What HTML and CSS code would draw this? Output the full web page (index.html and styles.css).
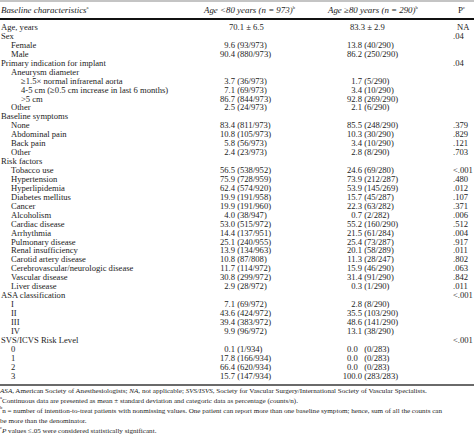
FILE: index.html
```
<!DOCTYPE html>
<html lang="en">
<head>
    <meta charset="UTF-8">
    <title>Baseline characteristics by age</title>
    <link rel="stylesheet" href="styles.css">
</head>
<body>

<div class="sheet">
    <div class="row head">
        <div><i>Baseline characteristics</i><sup>a</sup></div>
        <div class="h2"><i>Age &lt;80 years (n = 973)</i><sup>b</sup></div>
        <div class="h3"><i>Age &ge;80 years (n = 290)</i><sup>b</sup></div>
        <div class="hp">P<sup>c</sup></div>
    </div>

    <div class="body">
        <div class="row"><div>Age, years</div><div class="c2 mean">70.1 &plusmn; 6.5</div><div class="c3 mean">83.3 &plusmn; 2.9</div><div class="p na">NA</div></div>
        <div class="row"><div>Sex</div><div></div><div></div><div class="p">.04</div></div>
        <div class="row"><div class="i1">Female</div><div class="c2"><span class="n">9.6</span> (93/973)</div><div class="c3"><span class="n">13.8</span> (40/290)</div><div></div></div>
        <div class="row"><div class="i1">Male</div><div class="c2"><span class="n">90.4</span> (880/973)</div><div class="c3"><span class="n">86.2</span> (250/290)</div><div></div></div>
        <div class="row"><div>Primary indication for implant</div><div></div><div></div><div class="p">.04</div></div>
        <div class="row"><div class="i1">Aneurysm diameter</div><div></div><div></div><div></div></div>
        <div class="row"><div class="i2">&ge;1.5&times; normal infrarenal aorta</div><div class="c2"><span class="n">3.7</span> (36/973)</div><div class="c3"><span class="n">1.7</span> (5/290)</div><div></div></div>
        <div class="row"><div class="i2">4-5 cm (&ge;0.5 cm increase in last 6 months)</div><div class="c2"><span class="n">7.1</span> (69/973)</div><div class="c3"><span class="n">3.4</span> (10/290)</div><div></div></div>
        <div class="row"><div class="i2">&gt;5 cm</div><div class="c2"><span class="n">86.7</span> (844/973)</div><div class="c3"><span class="n">92.8</span> (269/290)</div><div></div></div>
        <div class="row"><div class="i1">Other</div><div class="c2"><span class="n">2.5</span> (24/973)</div><div class="c3"><span class="n">2.1</span> (6/290)</div><div></div></div>
        <div class="row"><div>Baseline symptoms</div><div></div><div></div><div></div></div>
        <div class="row"><div class="i1">None</div><div class="c2"><span class="n">83.4</span> (811/973)</div><div class="c3"><span class="n">85.5</span> (248/290)</div><div class="p">.379</div></div>
        <div class="row"><div class="i1">Abdominal pain</div><div class="c2"><span class="n">10.8</span> (105/973)</div><div class="c3"><span class="n">10.3</span> (30/290)</div><div class="p">.829</div></div>
        <div class="row"><div class="i1">Back pain</div><div class="c2"><span class="n">5.8</span> (56/973)</div><div class="c3"><span class="n">3.4</span> (10/290)</div><div class="p">.121</div></div>
        <div class="row"><div class="i1">Other</div><div class="c2"><span class="n">2.4</span> (23/973)</div><div class="c3"><span class="n">2.8</span> (8/290)</div><div class="p">.703</div></div>
        <div class="row"><div>Risk factors</div><div></div><div></div><div></div></div>
        <div class="row"><div class="i1">Tobacco use</div><div class="c2"><span class="n">56.5</span> (538/952)</div><div class="c3"><span class="n">24.6</span> (69/280)</div><div class="p">&lt;.001</div></div>
        <div class="row"><div class="i1">Hypertension</div><div class="c2"><span class="n">75.9</span> (728/959)</div><div class="c3"><span class="n">73.9</span> (212/287)</div><div class="p">.480</div></div>
        <div class="row"><div class="i1">Hyperlipidemia</div><div class="c2"><span class="n">62.4</span> (574/920)</div><div class="c3"><span class="n">53.9</span> (145/269)</div><div class="p">.012</div></div>
        <div class="row"><div class="i1">Diabetes mellitus</div><div class="c2"><span class="n">19.9</span> (191/958)</div><div class="c3"><span class="n">15.7</span> (45/287)</div><div class="p">.107</div></div>
        <div class="row"><div class="i1">Cancer</div><div class="c2"><span class="n">19.9</span> (191/960)</div><div class="c3"><span class="n">22.3</span> (63/282)</div><div class="p">.371</div></div>
        <div class="row"><div class="i1">Alcoholism</div><div class="c2"><span class="n">4.0</span> (38/947)</div><div class="c3"><span class="n">0.7</span> (2/282)</div><div class="p">.006</div></div>
        <div class="row"><div class="i1">Cardiac disease</div><div class="c2"><span class="n">53.0</span> (515/972)</div><div class="c3"><span class="n">55.2</span> (160/290)</div><div class="p">.512</div></div>
        <div class="row"><div class="i1">Arrhythmia</div><div class="c2"><span class="n">14.4</span> (137/951)</div><div class="c3"><span class="n">21.5</span> (61/284)</div><div class="p">.004</div></div>
        <div class="row"><div class="i1">Pulmonary disease</div><div class="c2"><span class="n">25.1</span> (240/955)</div><div class="c3"><span class="n">25.4</span> (73/287)</div><div class="p">.917</div></div>
        <div class="row"><div class="i1">Renal insufficiency</div><div class="c2"><span class="n">13.9</span> (134/963)</div><div class="c3"><span class="n">20.1</span> (58/289)</div><div class="p">.011</div></div>
        <div class="row"><div class="i1">Carotid artery disease</div><div class="c2"><span class="n">10.8</span> (87/808)</div><div class="c3"><span class="n">11.3</span> (28/247)</div><div class="p">.802</div></div>
        <div class="row"><div class="i1">Cerebrovascular/neurologic disease</div><div class="c2"><span class="n">11.7</span> (114/972)</div><div class="c3"><span class="n">15.9</span> (46/290)</div><div class="p">.063</div></div>
        <div class="row"><div class="i1">Vascular disease</div><div class="c2"><span class="n">30.8</span> (299/972)</div><div class="c3"><span class="n">31.4</span> (91/290)</div><div class="p">.842</div></div>
        <div class="row"><div class="i1">Liver disease</div><div class="c2"><span class="n">2.9</span> (28/972)</div><div class="c3"><span class="n">0.3</span> (1/290)</div><div class="p">.011</div></div>
        <div class="row"><div>ASA classification</div><div></div><div></div><div class="p">&lt;.001</div></div>
        <div class="row"><div class="i1">I</div><div class="c2"><span class="n">7.1</span> (69/972)</div><div class="c3"><span class="n">2.8</span> (8/290)</div><div></div></div>
        <div class="row"><div class="i1">II</div><div class="c2"><span class="n">43.6</span> (424/972)</div><div class="c3"><span class="n">35.5</span> (103/290)</div><div></div></div>
        <div class="row"><div class="i1">III</div><div class="c2"><span class="n">39.4</span> (383/972)</div><div class="c3"><span class="n">48.6</span> (141/290)</div><div></div></div>
        <div class="row"><div class="i1">IV</div><div class="c2"><span class="n">9.9</span> (96/972)</div><div class="c3"><span class="n">13.1</span> (38/290)</div><div></div></div>
        <div class="row"><div>SVS/ICVS Risk Level</div><div></div><div></div><div class="p">&lt;.001</div></div>
        <div class="row"><div class="i1">0</div><div class="c2"><span class="n">0.1</span> (1/934)</div><div class="c3"><span class="n left">0.0</span> (0/283)</div><div></div></div>
        <div class="row"><div class="i1">1</div><div class="c2"><span class="n">17.8</span> (166/934)</div><div class="c3"><span class="n left">0.0</span> (0/283)</div><div></div></div>
        <div class="row"><div class="i1">2</div><div class="c2"><span class="n">66.4</span> (620/934)</div><div class="c3"><span class="n left">0.0</span> (0/283)</div><div></div></div>
        <div class="row"><div class="i1">3</div><div class="c2"><span class="n">15.7</span> (147/934)</div><div class="c3"><span class="n">100.0</span> (283/283)</div><div></div></div>
    </div>

    <div class="notes">
        <p><i>ASA</i>, American Society of Anesthesiologists; <i>NA</i>, not applicable; <i>SVS/ISVS</i>, Society for Vascular Surgery/International Society of Vascular Specialists.</p>
        <p><sup>a</sup>Continuous data are presented as mean &plusmn; standard deviation and categoric data as percentage (counts/n).</p>
        <p><sup>b</sup>n = number of intention-to-treat patients with nonmissing values. One patient can report more than one baseline symptom; hence, sum of all the counts can</p>
        <p>be more than the denominator.</p>
        <p><sup>c</sup><i>P</i> values &le;.05 were considered statistically significant.</p>
    </div>
</div>

</body>
</html>
```

FILE: styles.css
```
body {
    margin: 0;
    background-color: white;
    color: #1c1c1c;
    font-family: "Liberation Serif", "Times New Roman", serif;
    overflow: hidden;
}
.sheet {
    width: 474px;
    border-top: 2px solid #c4c4c4;
}
.row {
    display: grid;
    grid-template-columns: 205px 125px 123px 1fr;
    font-size: 8.6px;
    line-height: 8.94px;
    height: 8.94px;
    white-space: nowrap;
}
.head {
    height: 16px;
    line-height: 17px;
    font-size: 8.9px;
    border-bottom: 2px solid #111;
    padding-left: 1px;
}
.head sup, .notes sup {
    font-size: 4.5px;
    vertical-align: 4px;
    line-height: 0;
}
.h2 {
    margin-left: -2px;
}
.h3 {
    margin-left: -3px;
}
.hp {
    padding-left: 4px;
}
.body {
    padding: 3px 0 3px;
    border-bottom: 2px solid #6a6a6a;
}
.body .row > div:first-child {
    padding-left: 1px;
}
.body .row > div.i1 {
    padding-left: 11px;
}
.body .row > div.i2 {
    padding-left: 21px;
}
.n {
    display: inline-block;
    text-align: right;
}
.c2 .n {
    width: 30px;
}
.c3 .n {
    width: 32px;
}
.c3 .n.left {
    text-align: left;
    padding-left: 17px;
    width: 15px;
}
.c2.mean {
    padding-left: 24px;
}
.c3.mean {
    padding-left: 20px;
}
.p.na {
    padding-left: 4px;
}
.notes p {
    margin: 0;
    font-size: 7.1px;
    line-height: 10px;
    white-space: nowrap;
}
```
